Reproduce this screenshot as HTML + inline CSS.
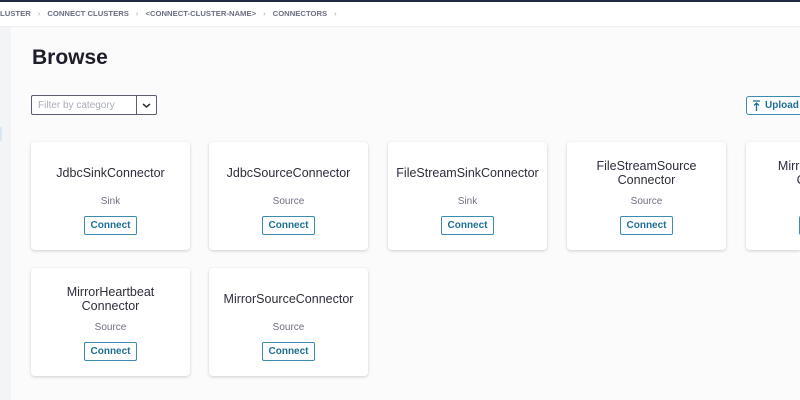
<!DOCTYPE html>
<html><head><style>
html,body{margin:0;width:800px;height:400px;overflow:hidden}
body{background:#fbfbfc;font-family:"Liberation Sans",sans-serif;position:relative}
.wrap{position:absolute;left:0;top:0;width:800px;height:400px;overflow:hidden}
.top{position:absolute;left:0;top:0;width:800px;height:2px;background:#1f2a44}
.bc{position:absolute;left:0;top:2px;width:800px;height:24px;background:#fff;border-bottom:1px solid #eceef1;font-size:7.7px;font-weight:bold;color:#6b6e80;line-height:23px;white-space:nowrap}
.bc span.s{color:#a0a3b0;margin:0 7px;font-weight:normal}
.side{position:absolute;left:0;top:27px;width:11px;height:373px;background:#f3f4f6}
.side i{position:absolute;left:0;top:100px;width:2px;height:14px;background:#d7e7f5}
h1{position:absolute;left:32px;top:46px;margin:0;font-size:21px;color:#1d1d2b;font-weight:bold}
.flt{position:absolute;left:31px;top:95px;width:124px;height:18px;border:1px solid #5a5c70;border-radius:2px;background:#fff;font-size:10px;color:#aaadb8;line-height:19px}
.flt span{padding-left:6px}
.flt b{position:absolute;right:0;top:0;width:19px;height:18px;border-left:1px solid #5a5c70}
.up{position:absolute;left:746px;top:96px;width:70px;height:17px;border:1px solid #3d8bb0;border-radius:3px;background:#fff;color:#1f6f94;font-size:10px;font-weight:bold;line-height:18px}
.card{position:absolute;width:159px;height:108px;background:#fff;border-radius:4px;box-shadow:0 1px 3px rgba(0,0,0,.18);text-align:center}
.t{position:absolute;left:0;right:0;font-size:12.5px;color:#2d2d3d;line-height:14px}
.k{position:absolute;left:0;right:0;top:54px;font-size:10px;color:#6e7080}
.btn{position:absolute;left:53px;top:74px;width:51px;height:17px;border:1px solid #3d8bb0;border-radius:2px;font-size:10px;font-weight:bold;color:#1f6f94;line-height:18px}
</style></head><body><div class="wrap">
<div class="top"></div>
<div class="bc">LUSTER<span class="s">›</span>CONNECT CLUSTERS<span class="s">›</span>&lt;CONNECT-CLUSTER-NAME&gt;<span class="s">›</span>CONNECTORS<span class="s">›</span></div>
<div class="side"><i></i></div>
<h1>Browse</h1>
<div class="flt"><span>Filter by category</span><b><svg width="19" height="18"><path d="M6 8l3.5 3 3.5-3" stroke="#333" stroke-width="1.5" fill="none"/></svg></b></div>
<div class="up"><svg width="18" height="17" style="vertical-align:top"><path d="M6 4h7M9.5 6v8M7 8.5l2.5-2.5 2.5 2.5" stroke="#1f6f94" stroke-width="1.3" fill="none"/></svg>Upload</div>

<div class="card" style="left:31px;top:142px"><div class="t" style="top:24px">JdbcSinkConnector</div><div class="k">Sink</div><div class="btn">Connect</div></div>
<div class="card" style="left:209px;top:142px"><div class="t" style="top:24px">JdbcSourceConnector</div><div class="k">Source</div><div class="btn">Connect</div></div>
<div class="card" style="left:388px;top:142px"><div class="t" style="top:24px">FileStreamSinkConnector</div><div class="k">Sink</div><div class="btn">Connect</div></div>
<div class="card" style="left:567px;top:142px"><div class="t" style="top:17px">FileStreamSource<br>Connector</div><div class="k">Source</div><div class="btn">Connect</div></div>
<div class="card" style="left:746px;top:142px;width:54px;border-radius:4px 0 0 4px;overflow:hidden"><div style="position:absolute;left:0;top:0;width:159px;height:108px"><div class="t" style="top:17px">MirrorCheckpoint<br>Connector</div><div class="k">Source</div><div class="btn">Connect</div></div></div>
<div class="card" style="left:31px;top:268px"><div class="t" style="top:17px">MirrorHeartbeat<br>Connector</div><div class="k">Source</div><div class="btn">Connect</div></div>
<div class="card" style="left:209px;top:268px"><div class="t" style="top:24px">MirrorSourceConnector</div><div class="k">Source</div><div class="btn">Connect</div></div>
</div></body></html>
